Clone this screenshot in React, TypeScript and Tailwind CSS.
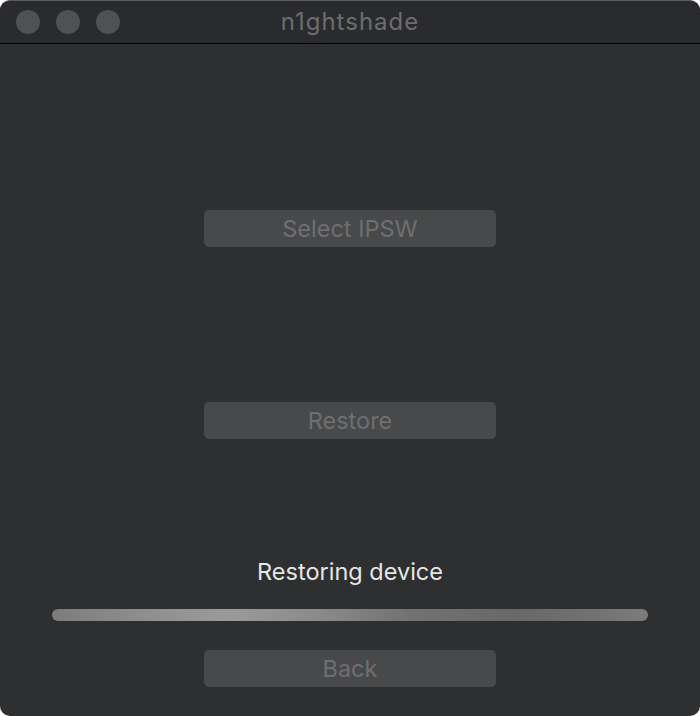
import React from 'react';

const font = { fontFamily: 'Inter, "Noto Sans", sans-serif' };

function MacButton({ label }: { label: string }) {
  return (
    <div className="flex h-[37px] w-[292px] items-center justify-center rounded-[5px] bg-[#48494b] text-[23.5px] text-[#6f6f71]">
      {label}
    </div>
  );
}

export default function App() {
  return (
    <div className="h-[716px] w-[700px] bg-white" style={font}>
      <div className="flex h-full w-full flex-col overflow-hidden rounded-[10px] border-t border-[#5c5c5e] bg-[#2e2f31]">
        {/* title bar */}
        <div className="relative flex h-[43px] items-center justify-center border-b border-black bg-[#2a2b2e]">
          <div className="absolute left-[16px] top-[9px] flex gap-[16px]">
            <span className="h-[24px] w-[24px] rounded-full bg-[#505153]" />
            <span className="h-[24px] w-[24px] rounded-full bg-[#505153]" />
            <span className="h-[24px] w-[24px] rounded-full bg-[#505153]" />
          </div>
          <span className="text-[24px] tracking-[1px] text-[#6d6d6f]">n1ghtshade</span>
        </div>

        {/* body */}
        <div className="flex flex-1 flex-col items-center">
          <div className="mt-[166px]">
            <MacButton label="Select IPSW" />
          </div>
          <div className="mt-[155px]">
            <MacButton label="Restore" />
          </div>
          <div className="mt-[119px] h-[28px] text-[23.5px] leading-[28px] text-[#e6e6e6]">Restoring device</div>
          <div className="mt-[23px] h-[12px] w-[596px] rounded-full bg-[linear-gradient(90deg,#7c7c7c_0%,#8e8e8e_15%,#9a9b99_30%,#8a8b89_45%,#727371_60%,#686868_78%,#737373_92%,#7c7c7c_100%)]" />
          <div className="mt-[29px]">
            <MacButton label="Back" />
          </div>
        </div>
      </div>
    </div>
  );
}
